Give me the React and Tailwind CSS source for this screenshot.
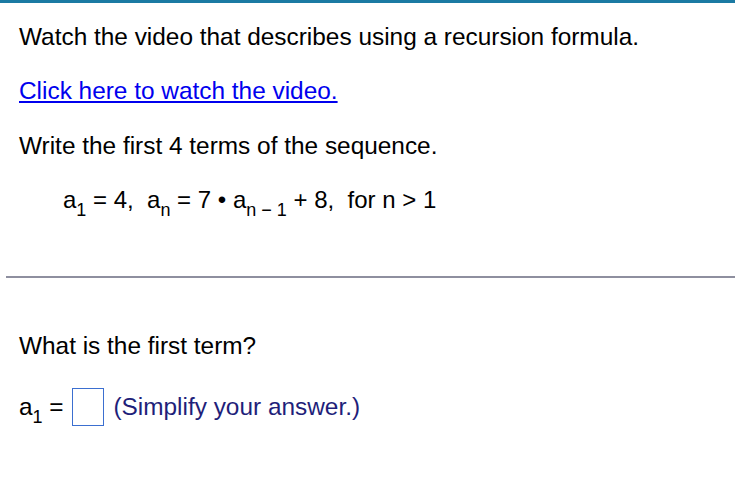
import React from 'react';

function Sub({ children }) {
  return <span className="relative top-[8px] text-[18px] leading-none">{children}</span>;
}

export default function App() {
  return (
    <div className="w-[735px] h-[482px] bg-white font-['Liberation_Sans',Arial,sans-serif] text-[24.4px] text-black">
      <div className="h-[3px] bg-[#1b7aa3]" />
      <div className="pl-[19px] pt-[20px]">
        <p className="leading-[28px]">Watch the video that describes using a recursion formula.</p>
        <p className="mt-[26px] leading-[28px]">
          <a href="#" className="text-[#0000ee] underline">Click here to watch the video.</a>
        </p>
        <p className="mt-[27px] leading-[28px]">Write the first 4 terms of the sequence.</p>
        <p className="mt-[26px] ml-[44px] leading-[28px] whitespace-pre text-[24px]">
          a<Sub>1</Sub> = 4,  a<Sub>n</Sub> = 7 • a<Sub>n − 1</Sub> + 8,  for n &gt; 1
        </p>
      </div>
      <div className="ml-[6px] mt-[62px] h-[2px] bg-[#8e8f9f]" />
      <div className="pl-[19px]">
        <p className="mt-[54px] leading-[28px]">What is the first term?</p>
        <div className="mt-[28px] flex items-center whitespace-pre leading-[28px]">
          <span>a<Sub>1</Sub> = </span>
          <span className="ml-[2px] w-[32px] h-[38px] border border-[#3b6fd0]" />
          <span className="ml-[9px] text-[#1f1f7a]">(Simplify your answer.)</span>
        </div>
      </div>
    </div>
  );
}
